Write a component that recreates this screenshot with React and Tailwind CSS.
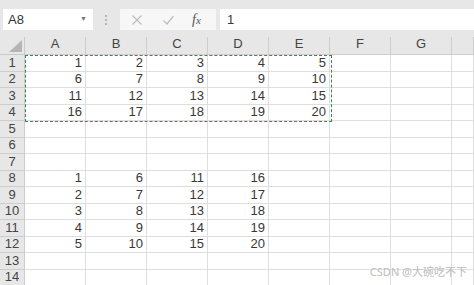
import React from "react";

const COLS = ["A", "B", "C", "D", "E", "F", "G", ""];
const ROW_H = [17, 16, 17, 16, 17, 16, 17, 16, 17, 16, 17, 16, 17, 16];

const data = {
  1: [1, 2, 3, 4, 5],
  2: [6, 7, 8, 9, 10],
  3: [11, 12, 13, 14, 15],
  4: [16, 17, 18, 19, 20],
  8: [1, 6, 11, 16],
  9: [2, 7, 12, 17],
  10: [3, 8, 13, 18],
  11: [4, 9, 14, 19],
  12: [5, 10, 15, 20],
};

const font = { fontFamily: '"Liberation Sans", "Noto Sans CJK SC", sans-serif' };

export default function App() {
  return (
    <div
      className="w-[474px] h-[285px] overflow-hidden bg-white text-[#383838]"
      style={font}
    >
      {/* toolbar */}
      <div className="h-[37px] bg-[#e7e7e7] flex items-start pt-[9px]">
        <div className="ml-[3px] w-[90px] h-[21px] bg-white flex items-center justify-between pl-[5px] pr-[6px]">
          <span className="text-[13px] text-[#333]">A8</span>
          <span className="text-[7px] text-[#777]">▼</span>
        </div>
        <div className="ml-[11px] w-[4px] h-[21px] flex flex-col items-center justify-center gap-[2px]">
          <span className="w-[2px] h-[2px] bg-[#b5b5b5]" />
          <span className="w-[2px] h-[2px] bg-[#b5b5b5]" />
          <span className="w-[2px] h-[2px] bg-[#b5b5b5]" />
        </div>
        <div className="ml-[12px] w-[96px] h-[21px] bg-[#f7f7f7] flex items-center">
          <svg width="12" height="12" viewBox="0 0 12 12" className="ml-[11px]">
            <path d="M1.5 1.5 L10.5 10.5 M10.5 1.5 L1.5 10.5" stroke="#bdbdbd" strokeWidth="1.2" fill="none" />
          </svg>
          <svg width="13" height="12" viewBox="0 0 13 12" className="ml-[19px]">
            <path d="M1.5 6.5 L5 10 L11.5 2" stroke="#bdbdbd" strokeWidth="1.2" fill="none" />
          </svg>
          <span
            className="ml-[17px] text-[14px] italic text-[#555]"
            style={{ fontFamily: '"Liberation Serif", serif' }}
          >
            f<span className="text-[11px]">x</span>
          </span>
        </div>
        <div className="ml-[4px] flex-1 h-[21px] bg-white flex items-center pl-[7px]">
          <span className="text-[13px]">1</span>
        </div>
      </div>

      {/* sheet */}
      <div className="relative">
        <div className="grid grid-cols-[25px_repeat(7,61px)_1fr]">
          {/* header row */}
          <div className="h-[18px] bg-[#e7e7e7] border-r border-[#c9c9c9] border-b relative flex items-end justify-end pr-[2px] pb-[2px]">
            <svg width="13" height="12" viewBox="0 0 13 12">
              <path d="M13 0 L13 12 L0 12 Z" fill="#b5b5b5" />
            </svg>
          </div>
          {COLS.map((c, i) => (
            <div
              key={"h" + i}
              className="h-[18px] bg-[#e7e7e7] border-r border-b border-[#cdcdcd] flex items-end justify-center pb-[1px] text-[13px] text-[#444]"
            >
              {c}
            </div>
          ))}

          {ROW_H.map((h, ri) => {
            const r = ri + 1;
            const vals = data[r] || [];
            return (
              <React.Fragment key={"r" + r}>
                <div
                  className="bg-[#e7e7e7] border-r border-b border-[#cdcdcd] flex items-end justify-center text-[13px] text-[#444] leading-none pb-[2px]"
                  style={{ height: h }}
                >
                  {r}
                </div>
                {COLS.map((c, ci) => (
                  <div
                    key={"c" + r + "-" + ci}
                    className="border-r border-b border-[#dedede] flex items-end justify-end pr-[3px] text-[13px] leading-none pb-[2px]"
                    style={{ height: h }}
                  >
                    {vals[ci] !== undefined ? vals[ci] : ""}
                  </div>
                ))}
              </React.Fragment>
            );
          })}
        </div>

        {/* copy marquee */}
        <div className="absolute left-[25px] top-[18px] w-[307px] h-[67px] border border-dashed border-[#2e8b57] pointer-events-none" />

        {/* watermark */}
        <div
          className="absolute right-[7px] top-[229px] text-[11px] text-[#bdbdbd] whitespace-nowrap leading-none"
          style={{ fontFamily: '"Noto Sans", "Noto Sans CJK SC", sans-serif' }}
        >
          CSDN @大碗吃不下
        </div>
      </div>
    </div>
  );
}
